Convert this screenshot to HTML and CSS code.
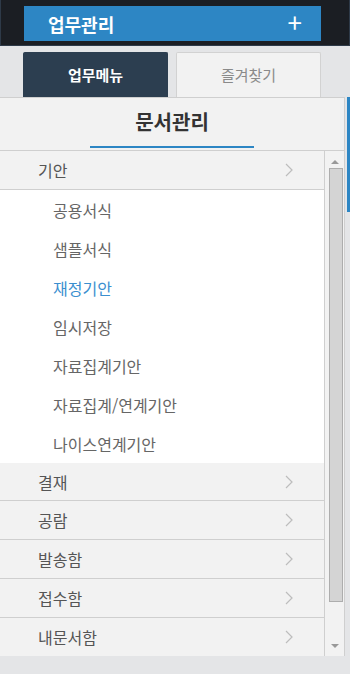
FILE: index.html
```html
<!DOCTYPE html>
<html lang="ko">
<head>
<meta charset="UTF-8" />
<meta name="viewport" content="width=device-width, initial-scale=1.0">
<title>업무관리</title>
<link rel="stylesheet" href="styles.css">
</head>
<body>

  <header class="top-bar">
    <div class="title-bar">
      <span class="title-text">업무관리</span>
      <span class="plus-icon">+</span>
    </div>
  </header>

  <div class="tabs">
    <div class="tab active">업무메뉴</div>
    <div class="tab">즐겨찾기</div>
  </div>

  <div class="layout">
    <div class="panel">
      <div class="panel-head">
        <span class="panel-title">문서관리</span>
      </div>

      <div class="list-wrap">
        <ul class="menu-list">
          <li class="cat">기안
            <svg class="chev" width="8" height="14" viewBox="0 0 8 14"><polyline points="1,1 7,7 1,13" fill="none" stroke="#bdbdbd" stroke-width="1.2"/></svg>
          </li>
          <li class="sub">공용서식</li>
          <li class="sub">샘플서식</li>
          <li class="sub on">재정기안</li>
          <li class="sub">임시저장</li>
          <li class="sub">자료집계기안</li>
          <li class="sub">자료집계/연계기안</li>
          <li class="sub">나이스연계기안</li>
          <li class="cat">결재
            <svg class="chev" width="8" height="14" viewBox="0 0 8 14"><polyline points="1,1 7,7 1,13" fill="none" stroke="#bdbdbd" stroke-width="1.2"/></svg>
          </li>
          <li class="cat">공람
            <svg class="chev" width="8" height="14" viewBox="0 0 8 14"><polyline points="1,1 7,7 1,13" fill="none" stroke="#bdbdbd" stroke-width="1.2"/></svg>
          </li>
          <li class="cat">발송함
            <svg class="chev" width="8" height="14" viewBox="0 0 8 14"><polyline points="1,1 7,7 1,13" fill="none" stroke="#bdbdbd" stroke-width="1.2"/></svg>
          </li>
          <li class="cat">접수함
            <svg class="chev" width="8" height="14" viewBox="0 0 8 14"><polyline points="1,1 7,7 1,13" fill="none" stroke="#bdbdbd" stroke-width="1.2"/></svg>
          </li>
          <li class="cat">내문서함
            <svg class="chev" width="8" height="14" viewBox="0 0 8 14"><polyline points="1,1 7,7 1,13" fill="none" stroke="#bdbdbd" stroke-width="1.2"/></svg>
          </li>
        </ul>

        <div class="scrollbar">
          <span class="arrow up"></span>
          <div class="thumb"></div>
          <span class="arrow down"></span>
        </div>
      </div>
    </div>

    <div class="side-strip"></div>
  </div>

</body>
</html>
```

FILE: styles.css
```css
body {
  margin: 0;
  background-color: #e4e5e7;
  font-family: "Noto Sans CJK KR", "Noto Sans", sans-serif;
}

/* top title */
.top-bar {
  height: 46px;
  box-sizing: border-box;
  background-color: #1b1e23;
  border: 1px solid #2e3a48;
  border-top: none;
  padding: 6px 28px 0 23px;
}
.title-bar {
  height: 35px;
  background-color: #2d86c4;
  display: flex;
  align-items: center;
  justify-content: space-between;
  padding: 0 19px 0 24px;
  color: white;
}
.title-text {
  font-size: 18px;
  font-weight: bold;
}
.plus-icon {
  font-size: 26px;
  line-height: 1;
  margin-top: -3px;
}

/* tabs */
.tabs {
  display: flex;
  gap: 8px;
  padding: 6px 0 0 23px;
  height: 51px;
  box-sizing: border-box;
}
.tab {
  width: 145px;
  box-sizing: border-box;
  background-color: #f2f2f2;
  border: 1px solid #d2d2d2;
  border-bottom: none;
  border-radius: 2px 2px 0 0;
  text-align: center;
  line-height: 44px;
  font-size: 15px;
  color: #8a8a8a;
}
.tab.active {
  background-color: #2c3e50;
  border-color: #2c3e50;
  color: white;
  font-weight: bold;
}

.layout {
  display: flex;
  align-items: flex-start;
}

/* panel */
.panel {
  width: 345px;
  box-sizing: border-box;
  background-color: #f2f2f2;
  border-top: 1px solid #cfcfcf;
  border-right: 1px solid #cfcfcf;
}
.panel-head {
  height: 53px;
  box-sizing: border-box;
  border-bottom: 1px solid #cfcfcf;
  text-align: center;
}
.panel-title {
  display: inline-block;
  width: 164px;
  height: 50px;
  box-sizing: border-box;
  padding-top: 9px;
  border-bottom: 2px solid #2d86c4;
  font-size: 20px;
  font-weight: bold;
  color: #333;
}

.list-wrap {
  display: flex;
  height: 505px;
  overflow: hidden;
}

ul.menu-list {
  list-style: none;
  margin: 0;
  padding: 0;
  width: 324px;
  border-right: 1px solid #cfcfcf;
}
li.cat {
  height: 39px;
  box-sizing: border-box;
  border-bottom: 1px solid #cfcfcf;
  display: flex;
  align-items: center;
  justify-content: space-between;
  padding: 0 31px 0 38px;
  font-size: 16px;
  color: #555;
}
li.sub {
  height: 39px;
  display: flex;
  align-items: center;
  padding-left: 53px;
  background-color: white;
  font-size: 16px;
  color: #666;
}
li.sub.on {
  color: #3b8fcf;
}
li.sub + li.cat {
  height: 38px;
}

/* fake scrollbar */
.scrollbar {
  width: 19px;
  display: flex;
  flex-direction: column;
  align-items: center;
  padding-top: 9px;
  padding-bottom: 8px;
  box-sizing: border-box;
}
.arrow {
  width: 0;
  height: 0;
  border-left: 4px solid transparent;
  border-right: 4px solid transparent;
}
.arrow.up {
  border-bottom: 4px solid #999;
  margin-bottom: 4px;
}
.arrow.down {
  border-top: 4px solid #999;
  margin-top: auto;
}
.thumb {
  width: 14px;
  height: 434px;
  box-sizing: border-box;
  margin-left: 2px;
  background-color: #d4d4d4;
  border: 1px solid #adadad;
}

.side-strip {
  width: 3px;
  height: 115px;
  margin-left: 2px;
  background-color: #2d86c4;
}
```
